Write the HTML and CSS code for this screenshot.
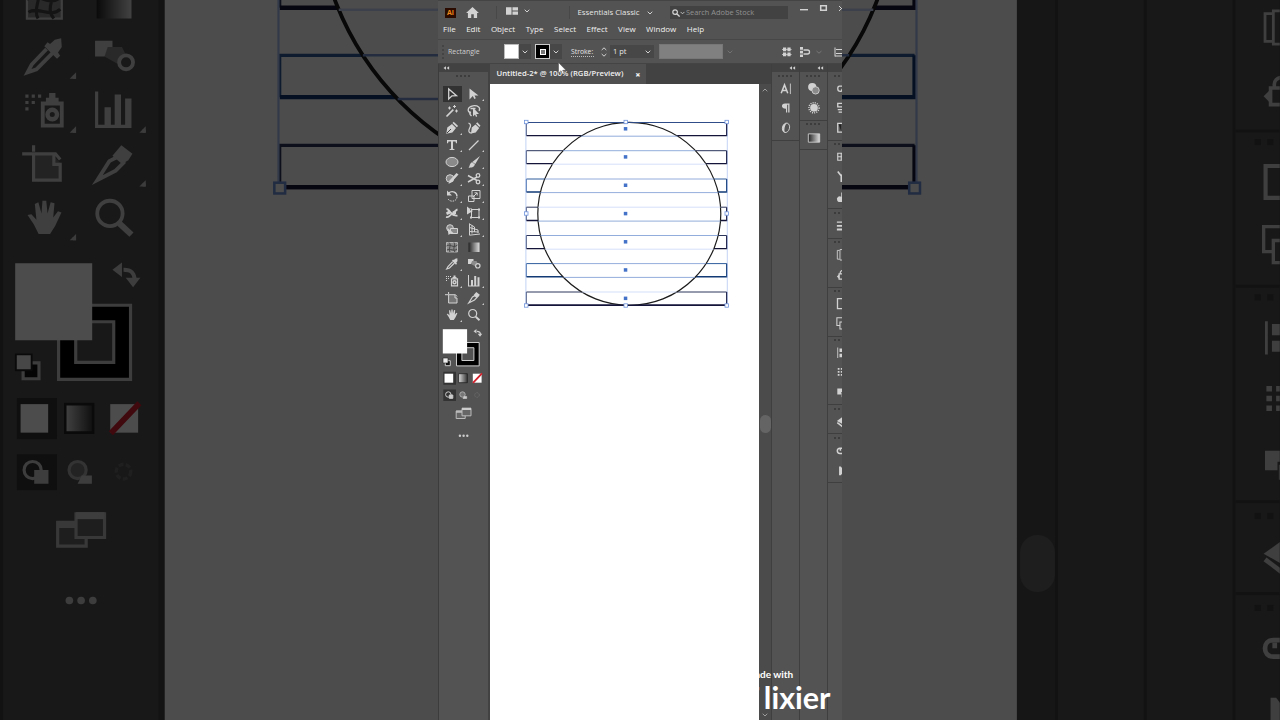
FILE: index.html
```html
<!DOCTYPE html>
<html lang="en">
    <head>
        <meta charset="utf-8">
        <title>Untitled-2 - Essentials Classic</title>
        <link rel="stylesheet" href="styles.css">
    </head>
    <body>
        <svg class="defs" width="0" height="0">
            <defs>
                <linearGradient id="fade"><stop offset="0" stop-color="#ddd"/><stop offset="1" stop-color="#333"/></linearGradient>
                <linearGradient id="fadeback"><stop offset="0" stop-color="#222"/><stop offset="1" stop-color="#ddd"/></linearGradient>
                <symbol id="chevron" viewBox="0 0 6 4"><path class="line" d="M.7.7L3 3 5.3.7"/></symbol>
                <symbol id="collapse" viewBox="0 0 8 4"><path d="M3.4 0v4L.6 2zM7 0v4L4.2 2z"/></symbol>
            </defs>
        </svg>

        <div class="backdrop" id="backdrop"></div>

        <div class="frame">
            <div class="titlebar">
                <span class="logo">Ai</span>
                <svg class="home" viewBox="0 0 14 12"><path d="M7 0L0 6.5h2V12h3.6V8h2.8v4H12V6.5h2z"/></svg>
                <i class="rule"></i>
                <svg class="arrange" viewBox="0 0 13 8"><path d="M0 0h6v8H0zM7 0h6v3.5H7zM7 4.5h6V8H7z"/></svg>
                <svg class="chev"><use href="#chevron"/></svg>
                <i class="rule second"></i>
                <span class="workspace-name">Essentials Classic</span>
                <svg class="chev"><use href="#chevron"/></svg>
                <div class="search">
                    <svg class="glass" viewBox="0 0 8 8"><path class="line" stroke-width="1.3" d="M4.8 4.8L7.6 7.6"/><circle class="line" stroke-width="1.2" cx="3.1" cy="3.1" r="2.3"/></svg>
                    <svg class="chev"><use href="#chevron"/></svg>
                    <span>Search Adobe Stock</span>
                </div>
                <svg class="winbtns" viewBox="0 0 42 12"><path d="M1 8h8v1.4H1z"/><path class="line" stroke-width="1.5" d="M21.7 4.700h5.6v4.6h-5.6z"/><path class="line" d="M40 5l5 5M45 5l-5 5"/></svg>
            </div>
            <div class="menubar">
                <span>File</span><span>Edit</span><span>Object</span><span>Type</span><span>Select</span><span>Effect</span><span>View</span><span>Window</span><span>Help</span>
            </div>
            <div class="options">
                <i class="handle"></i>
                <span class="kind">Rectangle</span>
                <i class="fill"></i>
                <span class="drop"><svg class="chev"><use href="#chevron"/></svg></span>
                <i class="outline"><b></b></i>
                <span class="drop"><svg class="chev"><use href="#chevron"/></svg></span>
                <span class="label">Stroke:</span>
                <svg class="stepper" viewBox="0 0 6 10"><path class="line" d="M.7 3L3 .8 5.3 3M.7 7L3 9.2 5.3 7"/></svg>
                <span class="weight">1 pt</span>
                <span class="drop tight"><svg class="chev"><use href="#chevron"/></svg></span>
                <i class="profile"></i>
                <svg class="chev off"><use href="#chevron"/></svg>
                <svg class="align" viewBox="0 0 60 10"><path d="M1 .5h3.200v3.700H1zM5.400.5h3.200v3.700H5.400zM1 5.500h3.200v3.700H1zM5.400 5.500h3.200v3.700H5.400zM0 2h9.600v.8H0zM0 7h9.600v.8H0zM18 0h3v2.700h-3zM18 3.700h3v2.700h-3zM18 7.400h3V10h-3z"/><path class="line" stroke-width="1.300" d="M21.500 3h4q2 0 2 2t-2 2h-4"/><path class="line" d="M53 .5v9M54 2.500h6M54 6.500h6M53 9h7"/><path class="line dim" d="M34.500 4L37 6.200 39.500 4"/></svg>
            </div>

            <div class="workspace" id="workspace">
                <div class="toolbar">
                    <div class="strip"><svg><use href="#collapse"/></svg></div>
                    <i class="grip"></i>
                    <div class="tools">
                        <span class="active"><svg viewBox="0 0 16 16"><path class="line" stroke-width="1.300" d="M4.700 3v10L8 9.900l4.500-.2z"/></svg></span>
                        <span class="more"><svg viewBox="0 0 16 16"><path d="M3.500 2.500v11L6.800 10l1.600 3 1.400-.7L8.500 9.500h4z"/></svg></span>
                        <span><svg viewBox="0 0 16 16"><path class="line" stroke-width="1.700" d="M2.500 13.500l6.800-6.800"/><path class="line" d="M10.500 2v3M9 3.500h3M12.500 6.500v3M11 8h3M5.500 3.500v3M4 5h3"/></svg></span>
                        <span><svg viewBox="0 0 16 16"><path class="line" stroke-width="1.300" d="M5 10C1 9 1 3.800 7 2.800c5-.6 8 2 6 5M4.500 8.500c-2 1.500 0 3.500 1 4.500M4.500 5.500h5"/><path d="M7 4.500v9l2-2 1 2.500 1.200-.7-1-2.300H13z"/></svg></span>
                        <span class="more"><svg viewBox="0 0 16 16"><path d="M2.300 13.700l1-6.200L8 4l4 4-3.600 4.500zM8.500 3l1.200-1.200 4.400 4.200-1.300 1.300z"/><path class="hole" d="M3 13l4-4"/></svg></span>
                        <span><svg viewBox="0 0 16 16"><path d="M5 13.500l.8-6L9.500 4.500l3.700 3.500-3.500 4.500zM10 3.500l1.300-1.200 3.200 3.500-1.200 1.200z"/><path class="line" stroke-width="1.300" d="M2.500 3c2.500 1 2.500 3 1 5.500s-.5 4.500 2 4.700"/></svg></span>
                        <span class="more"><svg viewBox="0 0 16 16"><path d="M3 3h10v3.200h-1L11.500 4.500H9v7.300l1.500.4V13h-5v-.8l1.500-.4V4.500H4.500L4 6.200H3z"/></svg></span>
                        <span class="more"><svg viewBox="0 0 16 16"><path class="line" stroke-width="1.200" d="M3 13L12.500 3.500"/></svg></span>
                        <span class="more"><svg viewBox="0 0 16 16"><ellipse class="line soft" cx="8" cy="8" rx="6" ry="4.600"/></svg></span>
                        <span class="more"><svg viewBox="0 0 16 16"><path d="M14 2L9.300 10 6.300 8zM6 8.300l2.900 2c-.6 3.400-3.900 3.400-6.400 3.400 1.500-1 .8-4.300 3.500-5.400z"/></svg></span>
                        <span class="more"><svg viewBox="0 0 16 16"><circle class="line soft" cx="6" cy="7.500" r="3.800"/><path d="M14.500 3.500l-6.500 7.300-3.500 2.200 1.200-3.700L12.500 2z"/></svg></span>
                        <span class="more"><svg viewBox="0 0 16 16"><path class="line" stroke-width="1.500" d="M2 4.500l9 5M2 11L11 6"/><circle class="line" stroke-width="1.300" cx="12" cy="4.500" r="1.800"/><circle class="line" stroke-width="1.300" cx="12" cy="11" r="1.800"/></svg></span>
                        <span class="more"><svg viewBox="0 0 16 16"><path class="line" stroke-width="1.300" d="M4.500 5c4-3 8.500-.5 8.500 3.500"/><path class="line" stroke-dasharray="1.500 1" d="M13 9c0 4-6 6-9 2"/><path d="M3 2.500v5h5z"/></svg></span>
                        <span class="more"><svg viewBox="0 0 16 16"><path class="line" d="M6 2.500h8v8H6zM2.500 8h5.500v5.500H2.500zM7 9l4-4M8.500 4.800H11.200V7.500"/></svg></span>
                        <span class="more"><svg viewBox="0 0 16 16"><path class="line" stroke-width="1.800" d="M2 12c3.500 1 3.500-2 5.500-2.500s3 2 6 1M2.500 4c3 0 3 4 5.500 4.500s3-3.500 5.500-4"/><path d="M2 7.500l3-2 1.500 3L3 10zM8.500 6.500L12 5v4L9 11z"/></svg></span>
                        <span class="more"><svg viewBox="0 0 16 16"><path class="line" d="M5 4.500h9M5 12.500h8.500M5.500 4v8M13 4v8"/><path d="M1 1.500v8l6-3.500zM4 3.500h2v2H4zM12 3.500h2v2h-2zM4 11.500h2v2H4zM12 11.500h2v2h-2z"/></svg></span>
                        <span class="more"><svg viewBox="0 0 16 16"><circle class="line soft" cx="6" cy="6" r="3.300"/><path class="line soft" d="M6.500 6.500h7v5h-7z"/><path d="M3.500 6l6 5-2.500.3L4.500 13z"/></svg></span>
                        <span class="more"><svg viewBox="0 0 16 16"><path class="line" d="M3.500 1.500v11.700L14 12M3.500 2l5 3v5M3.500 5.500l8.500 2.500v3M3.500 9.500l9 .5M6 3.500v8"/></svg></span>
                        <span><svg viewBox="0 0 16 16"><path class="soft" d="M2.500 3.500h11v9.500h-11z"/><path class="line" stroke-width=".7" d="M2.500 3.500h11V13h-11z"/><path class="hole" d="M2.500 7C6 4 9 10 13.500 6M5 3.500c3 3-1 6 1 9.500M10 3.500c2 3-2 6 1 9.500M3 11c3-2 7 2 10-1"/></svg></span>
                        <span><svg viewBox="0 0 16 16"><path class="grad" d="M2.500 3.500h11V13h-11z"/></svg></span>
                        <span class="more"><svg viewBox="0 0 16 16"><path d="M13.300 2.200l-2 .5L9.800 4 9 3.500 8 4.700l4 4 1-1-.7-1 1.200-1.700z"/><path class="line" stroke-width="1.200" d="M8.700 5.600L4 10.500 2.700 13 5.500 12l5-5"/></svg></span>
                        <span><svg viewBox="0 0 16 16"><path d="M2 3h5.500v2L5 8H2z"/><path class="soft" d="M6 5h4.500L12 8l-2.500 2.500L5 8z"/><circle class="line solid" stroke-width="1.200" cx="11.800" cy="9.800" r="2.200"/></svg></span>
                        <span class="more"><svg viewBox="0 0 16 16"><path class="line" stroke-width="1.200" d="M7.500 5.800h6v7h-6z"/><circle class="line" stroke-width="1.400" cx="10.500" cy="9.300" r="1.500"/><path d="M9.500 2.500h2V4h1v1.500H8.500V4h1zM2 3h1v1H2zM4 3h1v1H4zM6 3h1v1H6zM2 5h1v1H2zM4 5h1v1H4zM2 7h1v1H2z"/></svg></span>
                        <span class="more"><svg viewBox="0 0 16 16"><path d="M2 2h1v10.500h10.500v1H2zM5 7h2v6H5zM8.200 3h2v10h-2zM11.500 4.200h2V13h-2z"/></svg></span>
                        <span><svg viewBox="0 0 16 16"><path class="faded" d="M4.500 5H10.500L13 7.500V13H4.500z"/><path class="line" d="M1 4.700h10.500L13 6.500M4.600 2v2M4.600 5v8H13V8h-2V5"/></svg></span>
                        <span class="more"><svg viewBox="0 0 16 16"><path class="line" stroke-width="1.200" d="M2.700 13L6.500 7l3.300-1.700L11 7.500 8.500 10z"/><path d="M10.300 2l3.500 2.700-1.300 2-2 1.200-3-2.600z"/></svg></span>
                        <span class="more"><svg viewBox="0 0 16 16"><path d="M2.700 7l1.200-.2 1.600 1.700L5 3.500 6.100 3l1 3.500.3-4h1.200l.4 4 1-3.500 1.200.3-.4 4.500 1.500-2 1.100.4-2 4.300L9.800 13H6.200L4.700 10z"/></svg></span>
                        <span><svg viewBox="0 0 16 16"><circle class="line" stroke-width="1.200" cx="6.700" cy="6.500" r="4"/><path class="line" stroke-width="1.900" d="M9.700 9.700l3.800 3.500"/></svg></span>
                    </div>
                    <svg class="swatches" viewBox="0 0 46 42">
                        <path d="M14.500 14.500h22.700v23.400H14.500z" fill="#000" stroke="#ccc"/>
                        <path d="M19.900 19.700h12v12.800h-12z" fill="#535353" stroke="#ccc"/>
                        <path d="M.8 1.200h24.300v24.300H.8z" fill="#fff"/>
                        <path d="M35 3.300c2.500 0 3.500 1 3.500 3.500" fill="none" stroke="#ccc" stroke-width="1.300"/>
                        <path d="M34.500 1v4.600L31.500 3.300zM35.700 5.800h4.600l-2.300 3z" fill="#ccc"/>
                        <path d="M3.300 32.700h5v5h-5z" fill="#111" stroke="#ccc"/><path d="M1 30h5v5H1z" fill="#eee" stroke="#222" stroke-width=".6"/>
                    </svg>
                    <svg class="modes" viewBox="0 0 46 66">
                        <path d="M1.300 1.800h12.700v13H1.300zM1.300 19.500h12.700v11.400H1.300z" fill="#333"/>
                        <path d="M2.500 3.700h8.700v9H2.500z" fill="#fff"/>
                        <path d="M16.600 3.700h8.800v9h-8.800z" fill="url(#fade)" stroke="#222" stroke-width=".8"/>
                        <path d="M30.800 3.700h8.800v9h-8.800z" fill="#fff"/><path d="M31 12.900l9-9.500" stroke="#d3202c" stroke-width="1.800"/>
                        <g fill="none" stroke="#ccc"><circle cx="6.300" cy="24.500" r="2.700"/><path d="M7.300 25h3.500v3.300H7.300z" fill="#ccc"/><circle cx="20.500" cy="24.500" r="2.700" fill="#777" stroke="#aaa"/><path d="M22 26.500h2.700v2H21z" fill="#ccc" stroke-width=".6"/><circle cx="35" cy="25" r="2.300" stroke="#6a6a6a" stroke-dasharray="1.500 .8"/></g>
                        <path d="M14.200 41h9v7.500h-9z" fill="#666" stroke="#bbb"/><path d="M14 40.600h9v2.200h-9z" fill="#bbb"/>
                        <path d="M20 38.300h9v7.500h-9z" fill="#666" stroke="#bbb"/><path d="M20 37.800h9v2.200h-9z" fill="#ccc"/>
                        <g fill="#ccc"><circle cx="17.900" cy="65.700" r="1.200"/><circle cx="21.600" cy="65.700" r="1.200"/><circle cx="25.300" cy="65.700" r="1.200"/></g>
                    </svg>
                </div>

                <div class="document">
                    <div class="tabs"><div class="tab">Untitled-2* @ 100% (RGB/Preview)<b>×</b></div></div>
                    <div class="view">
                        <svg class="artboard" id="art" viewBox="490 84 269 636"></svg>
                        <div class="scroll">
                            <svg class="chev up"><use href="#chevron"/></svg>
                            <i></i>
                            <svg class="chev"><use href="#chevron"/></svg>
                        </div>
                    </div>
                </div>

                <div class="dock">
                    <div class="column">
                        <div class="strip"><svg><use href="#collapse"/></svg></div>
                        <div class="group">
                            <svg viewBox="0 0 16 16"><path class="line" stroke-width="1.700" d="M2.500 13L6.300 3.500l3.700 9.500M3.700 10h5"/><path class="line" d="M13 2v12"/></svg>
                            <svg viewBox="0 0 16 16"><path d="M7 3h5v10.500h-1.500V4.500H9.300v9H8V9C2 9 2 3 7 3z"/></svg>
                            <svg viewBox="0 0 16 16"><ellipse class="line" cx="8" cy="8" rx="4" ry="5.500" transform="rotate(15 8 8)"/><path d="M9 2.500c-6 0-7 10-2 11-2-3 0-9 2-11z"/></svg>
                        </div>
                    </div>
                    <div class="column">
                        <div class="strip"><svg><use href="#collapse"/></svg></div>
                        <div class="group">
                            <svg viewBox="0 0 16 16"><circle cx="6" cy="6" r="4.700"/><circle class="line soft" cx="9.800" cy="9.800" r="4.200"/></svg>
                            <svg viewBox="0 0 16 16"><circle cx="8" cy="8" r="4.400"/><circle class="line" stroke-width="1.700" stroke-dasharray="1.200 1.300" cx="8" cy="8" r="5.800"/></svg>
                        </div>
                        <div class="group">
                            <svg viewBox="0 0 16 16"><path class="line grad" d="M1.500 3.500h13v9.500h-13z"/></svg>
                        </div>
                    </div>
                    <div class="column cut">
                        <div class="strip"></div>
                        <div class="group">
                            <svg viewBox="0 0 16 16"><path class="line" stroke-width="1.500" d="M8 5H4q-2 0-2 3t3 3q2 0 2-3"/></svg>
                            <svg viewBox="0 0 16 16"><path class="line" stroke-width="1.500" d="M2 3h7v4H2zM2 10h7M3 13h6"/></svg>
                            <svg viewBox="0 0 16 16"><path class="line" stroke-width="1.500" d="M2 3h11v10H2z"/><path class="dark" d="M3 4h3v8z"/></svg>
                        </div>
                        <div class="group">
                            <svg viewBox="0 0 16 16"><path class="line" stroke-width="1.300" d="M2 4h12v8H2zM2 8h12M6 4v8"/></svg>
                            <svg viewBox="0 0 16 16"><path class="line" stroke-width="1.800" d="M2 2l4 5v7M6 7l2-2"/></svg>
                            <svg viewBox="0 0 16 16"><path d="M1 10q2-4 5-2V3h2v11H3q-2-1-2-4z"/></svg>
                        </div>
                        <div class="group"><svg viewBox="0 0 16 16"><path d="M1 3h13v1.500H1zM1 7h13v2H1zM1 11h13v2.500H1z"/></svg></div>
                        <div class="group">
                            <svg viewBox="0 0 16 16"><path class="line" d="M4 3H1.500v10H4M4.500 2h8v12h-8z"/></svg>
                            <svg viewBox="0 0 16 16"><path class="line" stroke-width="1.300" d="M5 7q-1-4 4-4M3.500 7h7v6h-7z"/><path d="M1 10l3-3v6z"/></svg>
                        </div>
                        <div class="group">
                            <svg viewBox="0 0 16 16"><path class="line" stroke-width="1.500" d="M1.700 2h12v11.500h-12z"/></svg>
                            <svg viewBox="0 0 16 16"><path class="line" stroke-width="1.200" d="M4 10H1V1h9v3M4.500 6h9v8h-9z"/></svg>
                        </div>
                        <div class="group">
                            <svg viewBox="0 0 16 16"><path d="M1.500 2h1v12h-1zM4 3h6v4H4zM4 9h8v4H4z"/></svg>
                            <svg viewBox="0 0 16 16"><path class="line" stroke-width="2" stroke-dasharray="2 1.500" d="M3 2.500v9.500M6.500 2.500v9.500"/></svg>
                            <svg viewBox="0 0 16 16"><path d="M1.500 3h9v4H6v3H1.500z"/><path class="line" d="M7 8v5h6"/></svg>
                        </div>
                        <div class="group"><svg viewBox="0 0 16 16"><path d="M1 7l7-5v9z"/><path class="line" stroke-width="1.700" d="M1.500 9L8 14"/></svg></div>
                        <div class="group">
                            <svg viewBox="0 0 16 16"><path class="line" stroke-width="1.700" d="M8 5H4.500C.5 5 .5 11 4.500 11H8M5 8V6"/></svg>
                            <svg viewBox="0 0 16 16"><path d="M3.500 3h2l4 5-4 5h-2z"/></svg>
                        </div>
                    </div>
                </div>
            </div>

            <div class="credit"><span>Made with</span><b><i>F</i>lixier</b></div>
            <svg class="pointer" viewBox="0 0 9 13"><path d="M.5.500v10.500l2.500-2.200 1.600 3.500 1.600-.7-1.500-3.300h3.300z"/></svg>
        </div>
        <script src="script.js"></script>
    </body>
</html>
```
FILE: script.js
```js
// stripes: [top, bottom, top line class, bottom line class]
var stripes = [
    [122.5, 135.6, "strong", "mid"],
    [150.7, 163.6, "mid", "faint"],
    [179, 192, "mid", "mid"],
    [207.2, 220.5, "faint", "mid"],
    [235.5, 248.6, "mid", "faint"],
    [263.6, 276.8, "mid", "mid"],
    [292, 305.2, "faint", "strong"]
];
var left = 526.3, right = 726.7, middle = 625.7;
var cx = 629.3, cy = 213.8, r = 91.5;
var art = "";

// selection line, only as wide as the circle at that height
function chord(y, type){
    var half = Math.sqrt(Math.max(0, r*r - (y - cy)*(y - cy)));
    var from = cx - half, to = cx + half;
    if(type === "strong"){
        from = left;
        to = right;
    }
    art += '<path class="' + type + '" d="M' + from + ' ' + y + 'H' + to + '"/>';
}

stripes.forEach(function(s, i){
    var blue = i === 2 || i === 5;
    art += '<path class="bar-top" stroke="' + (blue ? "#2f5d9c" : "#2c365c") + '" d="M' + left + ' ' + s[1] + 'V' + s[0] + 'H' + right + '"/>';
    art += '<path class="bar" stroke="' + (blue ? "#123a75" : "#14143a") + '" d="M' + left + ' ' + s[1] + 'H' + right + 'V' + s[0] + '"/>';
});
art += '<circle class="ring" cx="' + cx + '" cy="' + cy + '" r="' + r + '"/>';
stripes.forEach(function(s, i){
    chord(s[0], s[2]);
    if(i < 6) chord(s[1] + 0.6, s[3]);
    art += '<rect class="dot" x="' + (middle - 1.9) + '" y="' + ((s[0] + s[1]) / 2 - 2) + '" width="3.5" height="3.5"/>';
});
art += '<path class="bar" stroke="#14143a" d="M' + left + ' 305.2H' + right + '"/>';
art += '<path class="box" d="M' + (left - 0.4) + ' 122V305.500M' + (right + 0.6) + ' 122V305.500"/>';
[[left, 122], [middle, 122], [right, 122], [left, 213.5], [right, 213.5], [left, 305.5], [middle, 305.5], [right, 305.5]].forEach(function(p){
    art += '<rect class="knob" x="' + (p[0] - 1.7) + '" y="' + (p[1] - 1.7) + '" width="3.4" height="3.4"/>';
});
document.getElementById("art").innerHTML = art;

// the dimmed backdrop is an enlarged copy of the workspace
var copy = document.getElementById("workspace").cloneNode(true);
copy.removeAttribute("id");
copy.querySelector(".artboard").removeAttribute("id");
copy.querySelector(".tab").textContent = "";
document.getElementById("backdrop").appendChild(copy);
```
FILE: styles.css
```css
* {
    box-sizing: border-box;
}
body {
    margin: 0;
    width: 1280px;
    height: 720px;
    position: relative;
    overflow: hidden;
    background: #1a1a1a;
    color: #e6e6e6;
    font: 7.5px/1 "Open Sans", "Noto Sans", sans-serif;
}
svg {
    display: block;
    flex: none;
    fill: #d2d2d2;
}
i, b {
    font-style: normal;
    flex: none;
}
.defs {
    position: absolute;
}
.line {
    fill: none;
    stroke: #d2d2d2;
}
.soft {
    fill: #8a8a8a;
}
.faded {
    fill: #757575;
}
.solid {
    fill: #535353;
}
.grad {
    fill: url(#fadeback);
}
.dark {
    fill: #222;
}
.hole {
    fill: none;
    stroke: #444;
}
.dim {
    stroke: #777;
}
.chev {
    width: 6px;
    height: 4px;
}

/* enlarged copy behind the frame */
.backdrop {
    position: absolute;
    inset: 0;
    overflow: hidden;
}
.backdrop::after {
    content: "";
    position: absolute;
    inset: 0;
    background: rgba(0,0,0,0.7);
}
.backdrop .workspace {
    position: absolute;
    top: -577px;
    left: 0;
    width: 404px;
    height: 656px;
    transform-origin: 0 0;
    transform: scale(3.168);
}

.frame {
    position: relative;
    display: flex;
    flex-direction: column;
    width: 404px;
    height: 720px;
    margin-left: 438px;
    overflow: hidden;
    background: #535353;
}
.titlebar {
    display: flex;
    align-items: center;
    height: 21px;
    padding: 3px 0 0 7px;
    border-top: 1px solid #444;
}
.logo {
    width: 11px;
    height: 10px;
    background: #2b0a00;
    color: #f08a1c;
    font-weight: bold;
    font-size: 7px;
    line-height: 10px;
    text-align: center;
}
.home {
    width: 13px;
    height: 11px;
    margin-left: 10px;
}
.rule {
    width: 1px;
    height: 13px;
    margin-left: 17px;
    background: #484848;
}
.arrange {
    width: 12px;
    height: 8px;
    margin: -3px 6px 0 9px;
}
.arrange + .chev {
    margin-top: -3px;
}
.rule.second {
    margin-left: 39px;
}
.workspace-name {
    width: 63px;
    margin: 0 6.500px 0 7.500px;
    font-size: 7.800px;
    white-space: nowrap;
}
.search {
    display: flex;
    align-items: center;
    width: 118px;
    height: 13px;
    margin-left: 17px;
    padding-left: 2px;
    background: #424242;
    color: #929292;
    white-space: nowrap;
}
.glass {
    width: 8px;
    height: 8px;
}
.search .chev {
    width: 5px;
    margin-right: 1px;
}
.search span {
    font-size: 7.400px;
}
.winbtns {
    width: 42px;
    height: 12px;
    margin: -12px 0 0 11px;
    overflow: visible;
}
.menubar {
    display: flex;
    align-items: center;
    gap: 10.500px;
    height: 18px;
    padding: 0 0 1.500px 5px;
    color: #f0f0f0;
    font-size: 8px;
}
.options {
    display: flex;
    align-items: center;
    height: 25px;
    padding-left: 4px;
    border-top: 1px solid #474747;
    border-bottom: 1px solid #444;
}
.handle {
    width: 2px;
    height: 14px;
    border-left: 2px dotted #444;
}
.kind {
    width: 60px;
    padding-left: 4px;
    font-size: 7px;
    color: #d0d0d0;
}
.fill {
    width: 15px;
    height: 15px;
    background: #fff;
    border: 1px solid #bbb;
}
.drop {
    display: flex;
    align-items: center;
    justify-content: center;
    width: 12px;
    height: 15px;
    background: #474747;
}
.outline {
    display: flex;
    align-items: center;
    justify-content: center;
    width: 15px;
    height: 15px;
    margin-left: 4px;
    border: 1px solid #ccc;
    background: #000;
}
.outline b {
    width: 6px;
    height: 6px;
    border: 1px solid #fff;
    background: #777;
}
.label {
    width: 23px;
    margin: 2px 7px 0 9px;
    font-size: 6.800px;
    line-height: 8px;
    border-bottom: 1px dotted #bbb;
    white-space: nowrap;
}
.stepper {
    width: 6px;
    height: 10px;
}
.weight {
    width: 33px;
    height: 13px;
    margin-left: 3px;
    padding-left: 3px;
    background: #474747;
    line-height: 13px;
}
.drop.tight {
    width: 11px;
    height: 13px;
    padding-right: 2px;
}
.profile {
    width: 64px;
    height: 15px;
    margin: 0 4px 0 5px;
    background: #808080;
    border: 1px solid #777;
}
.off {
    opacity: 0.25;
}
.align {
    width: 60px;
    height: 10px;
    margin-left: 49px;
}

.workspace {
    display: flex;
    flex: 1;
    min-height: 0;
    background: #535353;
    overflow: hidden;
}
.strip {
    height: 8px;
    background: #424242;
    padding: 2px 0 0 4px;
}
.strip svg {
    width: 7px;
    height: 4px;
}
.toolbar {
    width: 52px;
    flex: none;
    border-left: 1px solid #3c3c3c;
    border-right: 2px solid #424242;
}
.grip {
    display: block;
    width: 14px;
    height: 2px;
    margin: 3px 0 9px 17px;
    border-top: 2px dotted #3c3c3c;
}
.tools {
    display: grid;
    grid-template-columns: 21.500px 22px;
    grid-auto-rows: 16.97px;
    margin-left: 2.500px;
}
.tools span {
    position: relative;
    display: flex;
    align-items: center;
    justify-content: center;
}
.tools svg {
    width: 16px;
    height: 16px;
}
.active {
    background: #323232;
    margin: 0 1px 1px 1px;
}
.more::after {
    content: "";
    position: absolute;
    right: 1.500px;
    bottom: 2px;
    border: solid transparent;
    border-width: 1.200px;
    border-right-color: #c8c8c8;
    border-bottom-color: #c8c8c8;
}
.swatches {
    width: 46px;
    height: 42px;
    margin: 4.500px 0 0 3px;
}
.modes {
    width: 46px;
    height: 66px;
    margin: 0 0 0 3px;
    overflow: visible;
}

.document {
    display: flex;
    flex-direction: column;
    width: 281px;
    flex: none;
}
.tabs {
    height: 20px;
    background: #424242;
}
.tab {
    display: flex;
    align-items: center;
    width: 156px;
    height: 20px;
    padding: 0 0 0 6.500px;
    background: #505050;
    font-size: 7.700px;
    font-weight: 600;
    color: #f0f0f0;
    white-space: nowrap;
}
.tab b {
    margin-left: 12px;
    font-size: 9px;
}
.view {
    display: flex;
    flex: 1;
}
.artboard {
    width: 269px;
    height: 636px;
    background: #fff;
}
.scroll {
    display: flex;
    flex-direction: column;
    align-items: center;
    justify-content: space-between;
    width: 12px;
    padding: 4px 0 3px;
    background: #4b4b4b;
}
.scroll i {
    width: 11px;
    height: 18px;
    margin-top: 43px;
    border-radius: 6px;
    background: #646464;
}
.scroll .chev {
    opacity: 0.6;
}
.up {
    transform: rotate(180deg);
}
.bar, .bar-top, .ring, .faint, .mid, .strong, .box {
    fill: none;
}
.bar {
    stroke-width: 1.4;
}
.bar-top {
    stroke-width: 1;
}
.ring {
    fill: #fff;
    stroke: #1c1c1c;
    stroke-width: 1.2;
}
.faint {
    stroke: #c9d7f7;
    stroke-width: 0.8;
}
.mid {
    stroke: #7698d2;
    stroke-width: 0.8;
}
.strong {
    stroke: #31508f;
    stroke-width: 0.9;
}
.box {
    stroke: #a9bff0;
    stroke-width: 0.7;
}
.dot {
    fill: #4372c8;
}
.knob {
    fill: #fff;
    stroke: #6f93dc;
    stroke-width: 0.8;
}

.dock {
    display: flex;
    flex: 1;
    min-width: 0;
    overflow: hidden;
}
.column {
    width: 28px;
    flex: none;
    border-left: 1.500px solid #3f3f3f;
}
.column .strip {
    padding-left: 17px;
}
.group {
    position: relative;
    padding: 6.800px 0 2px;
    border-bottom: 1px solid #3f3f3f;
}
.group::before {
    content: "";
    position: absolute;
    top: 2.500px;
    left: 6px;
    width: 14px;
    border-top: 2px dotted #3c3c3c;
}
.group svg {
    width: 14px;
    height: 19.600px;
    margin-left: 6.500px;
}
.cut svg {
    margin-left: 7.500px;
}

/* lies over the document and dock */
.credit {
    position: absolute;
    right: 11.500px;
    bottom: 5px;
    color: #fff;
    font-family: Lato, sans-serif;
}
.credit span {
    display: block;
    margin-left: -1px;
    font-size: 10px;
    font-weight: bold;
}
.credit b {
    display: block;
    margin-left: -4px;
    font-size: 30.500px;
    line-height: 36px;
}
.credit i {
    margin-right: 4px;
}
.pointer {
    position: absolute;
    left: 120px;
    top: 62px;
    width: 9px;
    height: 13px;
    fill: #fff;
    stroke: #444;
    stroke-width: 0.5;
}
```
